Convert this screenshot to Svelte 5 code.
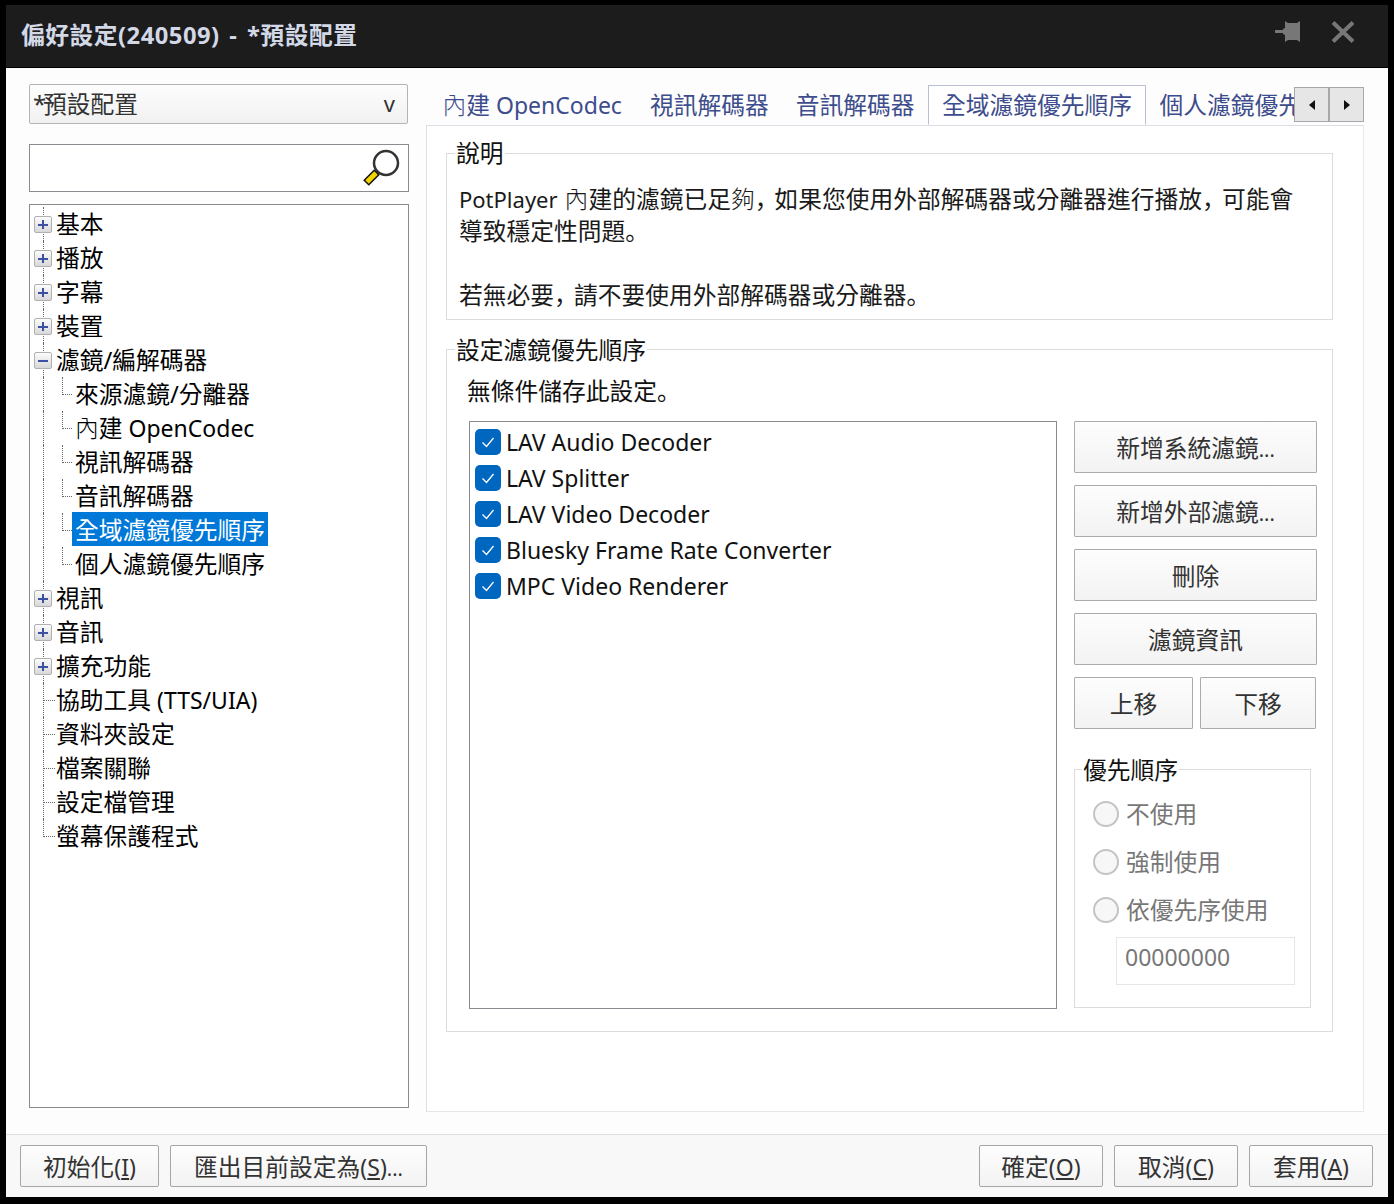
<script>
  const tree = [
    { t: '基本', k: 'plus' }, { t: '播放', k: 'plus' }, { t: '字幕', k: 'plus' }, { t: '裝置', k: 'plus' },
    { t: '濾鏡/編解碼器', k: 'minus' },
    { t: '來源濾鏡/分離器', k: 'child' },
    { t: '建', l: ' OpenCodec', thin: true, k: 'child' },
    { t: '視訊解碼器', k: 'child' }, { t: '音訊解碼器', k: 'child' },
    { t: '全域濾鏡優先順序', k: 'child', sel: true },
    { t: '個人濾鏡優先順序', k: 'child', last: true },
    { t: '視訊', k: 'plus' }, { t: '音訊', k: 'plus' }, { t: '擴充功能', k: 'plus' },
    { t: '協助工具', l: ' (TTS/UIA)', k: 'leaf' }, { t: '資料夾設定', k: 'leaf' }, { t: '檔案關聯', k: 'leaf' },
    { t: '設定檔管理', k: 'leaf' }, { t: '螢幕保護程式', k: 'leaf', end: true }
  ];
  const filters = ['LAV Audio Decoder', 'LAV Splitter', 'LAV Video Decoder', 'Bluesky Frame Rate Converter', 'MPC Video Renderer'];
  const radios = ['不使用', '強制使用', '依優先序使用'];
</script>

<div class="win">
  <header class="title">
    <span class="title-text">偏好設定(240509) - *預設配置</span>
    <svg class="pin" width="26" height="22" viewBox="0 0 26 22"><path d="M0 9h8V8l2-1V0l3 2h9l3-2v21l-3-2h-9l-3 2v-7l-2-1v-1H0z" fill="#777"/></svg>
    <svg class="close" width="24" height="22" viewBox="0 0 24 22"><path d="M2 1.5l20 19M22 1.5l-20 19" stroke="#777" stroke-width="4" fill="none"/></svg>
  </header>

  <main class="main">
    <aside class="left">
      <div class="combo"><span><span class="star">*</span>預設配置</span><span class="caret">v</span></div>
      <div class="search">
        <svg width="40" height="40" viewBox="0 0 40 40">
          <circle cx="25" cy="15" r="12" fill="#fff" stroke="#333" stroke-width="2.5"/>
          <path d="M16 24l-11 11" stroke="#111" stroke-width="8" fill="none"/>
          <path d="M15 25l-9 9" stroke="#f2d500" stroke-width="5" fill="none"/>
        </svg>
      </div>
      <div class="tree">
        {#each tree as r}
          <div class="row {r.k}" class:last={r.last} class:end={r.end}>
            {#if r.k === 'plus' || r.k === 'minus'}<span class="exp {r.k}"></span>{/if}
            <span class="lab" class:sel={r.sel}>{#if r.thin}<span class="thin">內</span>{/if}{r.t}{#if r.l}<span class="l">{r.l}</span>{/if}</span>
          </div>
        {/each}
      </div>
    </aside>

    <section class="right">
      <div class="strip">
        <div class="tabs">
          <span class="tab first"><span class="thin">內</span>建<span class="l">{' OpenCodec'}</span></span>
          <span class="tab">視訊解碼器</span>
          <span class="tab">音訊解碼器</span>
          <span class="tab active">全域濾鏡優先順序</span>
          <span class="tab">個人濾鏡優先順序</span>
        </div>
        <div class="scroller">
          <button class="sbtn" aria-label="上一個"><svg width="8" height="10" viewBox="0 0 8 10"><path d="M7 0v10L1 5z" fill="#111"/></svg></button>
          <button class="sbtn" aria-label="下一個"><svg width="8" height="10" viewBox="0 0 8 10"><path d="M1 0v10l6-5z" fill="#111"/></svg></button>
        </div>
      </div>
      <div class="panel">
        <div class="group g1">
          <span class="legend">說明</span>
          <p class="desc"><span class="pp">PotPlayer</span><span class="thin">內</span>建的濾鏡已足<span class="thin">夠</span><span class="p">，</span>如果您使用外部解碼器或分離器進行播放<span class="p">，</span>可能會<br>導致穩定性問題<span class="p2">。</span><br><br>若無必要<span class="p">，</span>請不要使用外部解碼器或分離器<span class="p2">。</span></p>
        </div>
        <div class="group g2">
          <span class="legend">設定濾鏡優先順序</span>
          <p class="uncond">無條件儲存此設定<span class="p2">。</span></p>
          <div class="work">
            <div class="list">
              {#each filters as f}
                <div class="item">
                  <span class="check"><svg width="14" height="12" viewBox="0 0 14 12"><path d="M1.5 6.5l4 4 7-8.5" stroke="#fff" stroke-width="1.3" fill="none"/></svg></span>
                  <span class="l">{f}</span>
                </div>
              {/each}
            </div>
            <div class="side">
              <button class="btn">新增系統濾鏡<span class="dots">...</span></button>
              <button class="btn">新增外部濾鏡<span class="dots">...</span></button>
              <button class="btn">刪除</button>
              <button class="btn">濾鏡資訊</button>
              <div class="pair">
                <button class="btn up">上移</button>
                <button class="btn down">下移</button>
              </div>
              <div class="group prio">
                <span class="legend">優先順序</span>
                <div class="radios">
                  {#each radios as x}
                    <div class="radio"><span class="dot"></span><span>{x}</span></div>
                  {/each}
                  <div class="num">00000000</div>
                </div>
              </div>
            </div>
          </div>
        </div>
      </div>
    </section>
  </main>

  <footer class="foot">
    <button class="fbtn w1">初始化<span class="l">(<u>I</u>)</span></button>
    <button class="fbtn w2">匯出目前設定為<span class="l">(<u>S</u>)</span><span class="dots">...</span></button>
    <span class="spacer"></span>
    <button class="fbtn w3">確定<span class="l">(<u>O</u>)</span></button>
    <button class="fbtn w3">取消<span class="l">(<u>C</u>)</span></button>
    <button class="fbtn w3">套用<span class="l">(<u>A</u>)</span></button>
  </footer>
</div>

<style>
  :global(body) { margin: 0; background: #000; }
  * { box-sizing: border-box; }
  .win {
    width: 1382px; height: 1192px; margin: 5px 0 0 6px; background: #fdfdfd;
    display: flex; flex-direction: column; overflow: hidden;
    font: 23.75px/32px "Noto Sans", "Noto Sans CJK TC", sans-serif; color: #111;
  }
  button { font: inherit; color: inherit; padding: 0; }
  .l { font-size: 23px; white-space: pre; line-height: 1; }
  .pp { font-size: 22px; margin-right: 7px; line-height: 1; }
  .dots { font-size: 20px; line-height: 1; }
  .star { letter-spacing: -3px; }
  .p, .p2 { font-family: "Noto Sans CJK JP", sans-serif; line-height: 1; }
  .p { font-feature-settings: "halt"; margin-right: 8px; }
  .thin { font-weight: 300; line-height: 1; }
  .title {
    height: 63px; flex: none; background: #1c1c1c; border-bottom: 1px solid #000;
    display: flex; align-items: center; padding: 0 33px 0 15px; color: #d3d8e6;
  }
  .title-text { font-weight: 700; flex: 1; position: relative; top: -1px; letter-spacing: 0.5px; word-spacing: 3px; }
  .pin { margin-top: -8px; margin-right: 30px; }
  .close { margin-top: -8px; }

  .main { height: 1066px; flex: none; display: flex; padding: 16px 0 0 23px; gap: 17px; }
  .left { width: 380px; flex: none; }
  .combo {
    height: 40px; width: 379px; border: 1px solid #b4b4b4; border-radius: 2px;
    background: linear-gradient(#fdfdfd, #f1f1f1);
    display: flex; align-items: center; justify-content: space-between; padding: 0 12px 0 3px; color: #333;
  }
  .caret { font-size: 22px; position: relative; top: -1px; }
  .search {
    height: 48px; margin-top: 20px; border: 1px solid #8a8a90; background: #fff;
    display: flex; justify-content: flex-end; align-items: center; padding-right: 7px;
  }
  .tree { height: 904px; margin-top: 12px; border: 1px solid #8a8a90; background: #fff; padding-top: 2px; }
  .row { height: 34px; display: flex; align-items: center; position: relative; padding-left: 4px; color: #000; }
  .row::before { content: ""; position: absolute; left: 13px; top: 0; bottom: 0; border-left: 1px dotted #666; }
  .row.end::before { bottom: 16px; }
  .row.leaf { padding-left: 26px; }
  .row.leaf::after { content: ""; position: absolute; left: 14px; width: 11px; top: 17px; border-top: 1px dotted #666; }
  .row.child { padding-left: 42px; }
  .row.child::after {
    content: ""; position: absolute; left: 32px; top: 0; bottom: 16px; width: 9px;
    border-left: 1px dotted #666; border-bottom: 1px dotted #666;
  }
  .exp {
    width: 18px; height: 17px; margin-right: 4px; flex: none; position: relative; z-index: 1;
    border: 1px solid #b0b0b0; border-radius: 2px; background: linear-gradient(#fcfcfc, #d8d8d8);
  }
  .exp::before { content: ""; position: absolute; left: 3px; right: 3px; top: 7px; height: 2px; background: #3d51a0; }
  .exp.plus::after { content: ""; position: absolute; top: 3px; bottom: 3px; left: 7px; width: 2px; background: #3d51a0; }
  .row.child .lab { padding: 0 3px; height: 34px; line-height: 34px; }
  .row.child .lab.sel { background: #0078d7; color: #fff; position: relative; top: -1px; line-height: 36px; }

  .right { width: 938px; flex: none; position: relative; }
  .strip { height: 40px; position: relative; }
  .tabs { display: flex; align-items: flex-end; height: 41px; padding-left: 3px; overflow: hidden; width: 868px; margin-top: 1px; position: relative; top: -1px; }
  .tab { height: 39px; line-height: 38px; padding: 0 13.5px; white-space: nowrap; color: #3d4c8c; flex: none; }
  .tab.first { padding-right: 14.5px; }
  .tab.active { height: 40px; border: 1px solid #b9bfd4; border-bottom-color: #fff; background: #fff; padding: 0 13px; z-index: 1; position: relative; }
  .scroller { position: absolute; right: 0; top: 2px; display: flex; height: 35px; }
  .sbtn {
    width: 35px; height: 35px; border: 1px solid #a8a8a8; background: #e6e6e6;
    display: flex; align-items: center; justify-content: center;
  }
  .panel { height: 987px; border: 1px solid #dcdde6; border-right-color: #eaeaea; border-bottom-color: #e6e6e6; background: #fff; padding: 28px 30px 0 19px; }
  .group { border: 1px solid #dcdcdc; position: relative; }
  .legend { display: block; width: fit-content; margin: -17px 0 0 9px; padding: 0 1px; background: #fff; height: 32px; white-space: nowrap; color: #111; }
  .g1 { height: 167px; margin-top: -1px; }
  .desc { margin: 14px 0 0 12px; white-space: nowrap; color: #1a1a1a; }
  .g1 > .legend, .g2 > .legend { position: relative; left: -1px; }
  .g2 { height: 683px; margin-top: 29px; padding: 0 15px 0 22px; }
  .g2 > .legend { margin: -16px 0 0 -13px; }
  .uncond { margin: 9px 0 0 -2px; color: #111; }
  .work { display: flex; margin-top: 14px; gap: 17px; }
  .list { width: 588px; height: 588px; border: 1px solid #8a8a90; padding-top: 2px; flex: none; }
  .item { height: 36px; display: flex; align-items: center; padding-left: 5px; gap: 5px; color: #111; }
  .check { width: 26px; height: 26px; border-radius: 5px; background: #0067c0; display: flex; align-items: center; justify-content: center; flex: none; }
  .side { width: 243px; flex: none; display: flex; flex-direction: column; gap: 12px; align-items: stretch; }
  .btn { height: 52px; border: 1px solid #ababab; border-radius: 1px; background: linear-gradient(#fdfdfd, #f3f3f3); color: #333; padding-top: 2px; }
  .pair { display: flex; gap: 7px; }
  .up { width: 119px; } .down { width: 116px; }
  .prio { width: 237px; height: 239px; margin-top: 28px; }
  .prio .legend { margin: -16px 0 0 7px; }
  .radios { padding: 4px 0 0 18px; color: #777; }
  .radio { height: 48px; display: flex; align-items: center; gap: 7px; }
  .dot { width: 26px; height: 26px; border-radius: 50%; border: 2px solid #c4c4c4; background: #f7f7f7; flex: none; }
  .num { width: 179px; height: 48px; margin: 3px 0 0 23px; border: 1px solid #e6e6e6; padding: 3px 0 0 8px; color: #777; font-size: 23px; }

  .foot { height: 63px; flex: none; border-top: 1px solid #e0e0e0; background: #f8f8f8; display: flex; padding: 10px 15px 0 14px; gap: 11px; }
  .spacer { flex: 1; }
  .fbtn { height: 42px; border: 1px solid #a6a6a6; border-radius: 2px; background: linear-gradient(#fdfdfd, #f3f3f3); color: #333; padding-top: 2px; }
  .w1 { width: 139px; } .w2 { width: 257px; } .w3 { width: 124px; }
</style>
